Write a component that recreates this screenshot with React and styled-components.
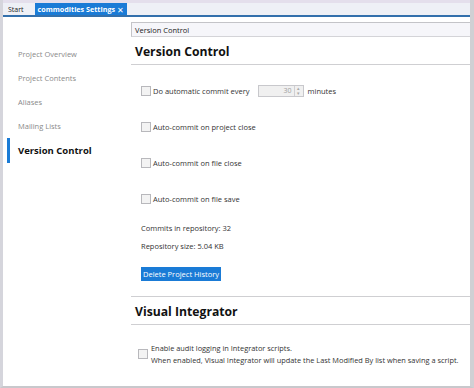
import styled, { createGlobalStyle } from "styled-components";

const GlobalStyle = createGlobalStyle`
  html, body {
    margin: 0;
    padding: 0;
    background: #ffffff;
  }
  body {
    font-family: "Open Sans", "Noto Sans", sans-serif;
    color: #333333;
  }
`;

const sidebarItems = [
  "Project Overview",
  "Project Contents",
  "Aliases",
  "Mailing Lists",
  "Version Control",
];

const commitOptions = [
  "Auto-commit on project close",
  "Auto-commit on file close",
  "Auto-commit on file save",
];

export default function App() {
  return (
    <>
      <GlobalStyle />
      <Window>
        <TopStrip />
        <TabBar>
          <Tab>Start</Tab>
          <Tab active>
            commodities Settings <Close>✕</Close>
          </Tab>
        </TabBar>
        <Body>
          <Sidebar>
            {sidebarItems.map((item) => (
              <NavItem key={item} active={item === "Version Control"}>
                {item}
              </NavItem>
            ))}
          </Sidebar>
          <Main>
            <Breadcrumb>Version Control</Breadcrumb>
            <Section>
              <Heading>Version Control</Heading>
              <Options>
                <OptionRow>
                  <Checkbox />
                  <Label>Do automatic commit every</Label>
                  <Spinner>
                    <SpinValue>30</SpinValue>
                    <SpinArrows>
                      <span>▴</span>
                      <span>▾</span>
                    </SpinArrows>
                  </Spinner>
                  <Label>minutes</Label>
                </OptionRow>
                {commitOptions.map((opt) => (
                  <OptionRow key={opt}>
                    <Checkbox />
                    <Label>{opt}</Label>
                  </OptionRow>
                ))}
              </Options>
              <Info>Commits in repository: 32</Info>
              <Info>Repository size: 5.04 KB</Info>
              <DangerButton>Delete Project History</DangerButton>
            </Section>
            <Section divided>
              <Heading>Visual Integrator</Heading>
              <AuditRow>
                <Checkbox />
                <AuditText>
                  Enable audit logging in Integrator scripts.
                  <br />
                  When enabled, Visual Integrator will update the Last Modified By list when saving a script.
                </AuditText>
              </AuditRow>
            </Section>
          </Main>
        </Body>
      </Window>
    </>
  );
}

const Window = styled.div`
  width: 474px;
  height: 388px;
  box-sizing: border-box;
  border-left: 3px solid #d5d5dc;
  border-right: 4px solid #d0d0d4;
  border-bottom: 2px solid #c8c8cc;
  display: flex;
  flex-direction: column;
  overflow: hidden;
`;

const TopStrip = styled.div`
  height: 3px;
  background: #e4dfec;
`;

const TabBar = styled.div`
  height: 12px;
  display: flex;
  align-items: stretch;
  padding-left: 1px;
  background: #eef0f6;
  border-bottom: 2px solid #3370ac;
`;

const Tab = styled.div`
  display: flex;
  align-items: center;
  padding: ${(p) => (p.active ? "0 3px" : "0 11px 0 4px")};
  font-size: ${(p) => (p.active ? "7.2px" : "7px")};
  font-weight: ${(p) => (p.active ? 700 : 400)};
  color: ${(p) => (p.active ? "#ffffff" : "#222222")};
  background: ${(p) => (p.active ? "#1a7bd6" : "transparent")};
  white-space: nowrap;
`;

const Close = styled.span`
  margin-left: 2px;
  font-weight: 400;
  font-size: 8px;
`;

const Body = styled.div`
  flex: 1;
  display: flex;
  min-height: 0;
`;

const Sidebar = styled.nav`
  width: 128px;
  flex-shrink: 0;
  padding-top: 31px;
  display: flex;
  flex-direction: column;
  gap: 13px;
`;

const NavItem = styled.div`
  height: ${(p) => (p.active ? "25px" : "11px")};
  margin-top: ${(p) => (p.active ? "-6px" : "0")};
  display: flex;
  align-items: center;
  padding-left: ${(p) => (p.active ? "8px" : "15px")};
  border-left: ${(p) => (p.active ? "3px solid #1a7bd6" : "none")};
  margin-left: ${(p) => (p.active ? "4px" : "0")};
  font-size: ${(p) => (p.active ? "9.5px" : "7.5px")};
  font-weight: ${(p) => (p.active ? 700 : 400)};
  color: ${(p) => (p.active ? "#111111" : "#8a8a8a")};
`;

const Main = styled.main`
  flex: 1;
  min-width: 0;
  display: flex;
  flex-direction: column;
  padding-top: 5px;
`;

const Breadcrumb = styled.div`
  height: 13px;
  display: flex;
  align-items: center;
  padding-left: 3px;
  font-size: 7.5px;
  color: #222222;
  background: #f6f6fa;
  border-top: 1px solid #c4c4c8;
  border-left: 1px solid #c4c4c8;
  border-bottom: 1px solid #d4d4d8;
`;

const Section = styled.section`
  display: flex;
  flex-direction: column;
  border-top: ${(p) => (p.divided ? "1px solid #cfcfd2" : "none")};
`;

const Heading = styled.h2`
  margin: 0;
  height: 28px;
  display: flex;
  align-items: center;
  padding: 2px 0 0 4px;
  box-sizing: border-box;
  font-size: 12.2px;
  font-weight: 700;
  color: #111111;
  border-bottom: 1px solid #cfcfd2;
`;

const Options = styled.div`
  display: flex;
  flex-direction: column;
  gap: 23px;
  padding: 19px 0 0 10px;
`;

const OptionRow = styled.div`
  height: 13px;
  display: flex;
  align-items: center;
  gap: 2px;
`;

const Checkbox = styled.span`
  width: 8px;
  height: 8px;
  flex-shrink: 0;
  border: 1px solid #b8b8bc;
  background: #f3f3f3;
`;

const Label = styled.span`
  font-size: 7.5px;
  color: #333333;
  white-space: nowrap;
`;

const Spinner = styled.div`
  width: 46px;
  height: 12px;
  margin: 0 2px 0 6px;
  box-sizing: border-box;
  display: flex;
  border: 1px solid #c8c8cc;
  background: #f0f0f0;
`;

const SpinValue = styled.span`
  flex: 1;
  display: flex;
  align-items: center;
  justify-content: flex-end;
  padding-right: 2px;
  font-size: 7px;
  color: #a0a0a0;
`;

const SpinArrows = styled.span`
  width: 8px;
  display: flex;
  flex-direction: column;
  border-left: 1px solid #d0d0d4;
  font-size: 5px;
  line-height: 5px;
  color: #a8a8a8;
  text-align: center;
`;

const Info = styled.div`
  margin: 18px 0 0 10px;
  font-size: 7.5px;
  line-height: 11px;
  color: #333333;
  & + & {
    margin-top: 7px;
  }
`;

const DangerButton = styled.button`
  align-self: flex-start;
  margin: 15px 0 15px 10px;
  height: 14px;
  padding: 0 2px;
  border: none;
  background: #1a7bd6;
  color: #ffffff;
  font-family: inherit;
  font-size: 7.5px;
`;

const AuditRow = styled.div`
  display: flex;
  align-items: center;
  gap: 3px;
  padding: 17px 0 0 7px;
`;

const AuditText = styled.div`
  font-size: 7.4px;
  line-height: 12px;
  color: #333333;
  white-space: nowrap;
`;
